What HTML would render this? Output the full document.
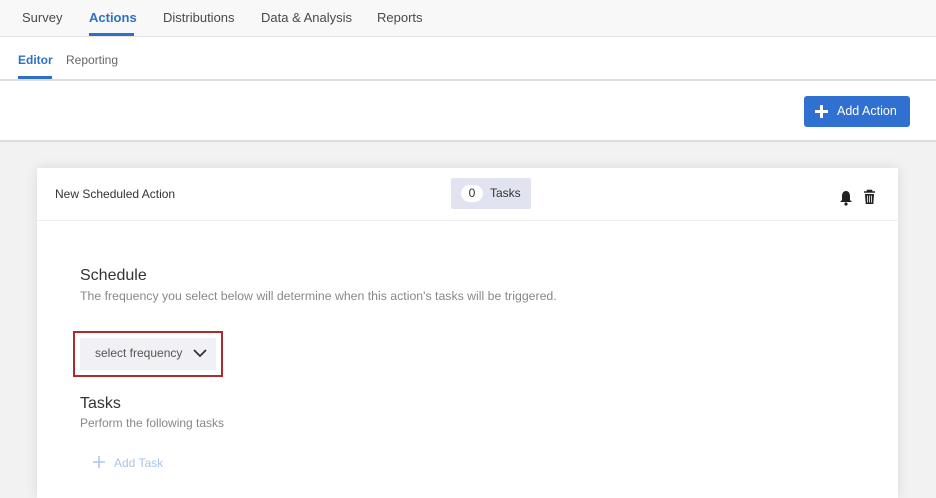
<!DOCTYPE html>
<html><head><style>
*{margin:0;padding:0;box-sizing:border-box}
body{width:936px;height:484px;overflow:hidden;background:#f2f2f2;font-family:"Liberation Sans",sans-serif;position:relative}
.a{position:absolute}
.nav{left:0;top:0;width:936px;height:37px;background:#f8f8f8;border-bottom:1px solid #e4e4e4}
.nav span{position:absolute;top:10px;font-size:13px;color:#4a4a4a}
.sub{left:0;top:37px;width:936px;height:105px;background:#fff;border-bottom:2px solid #ddd}
.sub .line{position:absolute;left:0;top:42px;width:936px;height:2px;background:#ddd}
.card{left:37px;top:168px;width:861px;height:330px;background:#fff;box-shadow:0 0 12px rgba(0,0,0,.1)}
</style></head><body>
<div class="a nav">
<span style="left:22px">Survey</span>
<span style="left:89px;color:#2e70c4;font-weight:bold">Actions</span>
<div class="a" style="left:89px;top:33px;width:45px;height:3px;background:#2e70c4"></div>
<span style="left:163px">Distributions</span>
<span style="left:261px">Data &amp; Analysis</span>
<span style="left:377px">Reports</span>
</div>
<div class="a sub">
<div class="a" style="left:18px;top:16px;font-size:12px;font-weight:bold;color:#2e70c4">Editor</div>
<div class="a" style="left:18px;top:39px;width:34px;height:3px;background:#2e70c4"></div>
<div class="a" style="left:66px;top:16px;font-size:12px;color:#666">Reporting</div>
<div class="line"></div>
<div class="a" style="left:804px;top:59px;width:106px;height:31px;background:#2f70d0;border-radius:3px;color:#fff;font-size:12.5px">
<svg class="a" style="left:10px;top:8px" width="15" height="15"><path d="M7.5 1v13M1 7.5h13" stroke="#fff" stroke-width="3"/></svg>
<span class="a" style="left:33px;top:8px">Add Action</span></div>
</div>
<div class="a card">
<div class="a" style="left:18px;top:19px;font-size:12px;color:#333">New Scheduled Action</div>
<div class="a" style="left:414px;top:10px;width:80px;height:31px;background:#e1e3f0;border-radius:2px">
<div class="a" style="left:10px;top:7px;width:22px;height:17px;background:#fff;border-radius:9px;font-size:12px;color:#333;text-align:center;line-height:17px">0</div>
<span class="a" style="left:39px;top:8px;font-size:12px;color:#333">Tasks</span></div>
<svg class="a" style="left:802px;top:22px" width="14" height="16"><path d="M7 1C4 1 3 4 3 6v4L1 12h12l-2-2V6c0-2-1-5-4-5z" fill="#222"/><circle cx="7" cy="14" r="1.6" fill="#222"/></svg>
<svg class="a" style="left:826px;top:21px" width="13" height="16"><path d="M1 3h11M4.5 3V1.5h4V3" stroke="#222" stroke-width="1.5" fill="none"/><path d="M2 5h9l-.7 10H2.7z" fill="#222"/><path d="M4.5 6.5v7M6.5 6.5v7M8.5 6.5v7" stroke="#fff" stroke-width=".8"/></svg>
<div class="a" style="left:0;top:52px;width:861px;height:1px;background:#eee"></div>
<div class="a" style="left:43px;top:99px;font-size:16px;color:#333">Schedule</div>
<div class="a" style="left:43px;top:121px;font-size:12.3px;color:#888">The frequency you select below will determine when this action's tasks will be triggered.</div>
<div class="a" style="left:36px;top:163px;width:150px;height:46px;border:2px solid #b0292f"></div>
<div class="a" style="left:43px;top:170px;width:136px;height:32px;background:#f0f0f5;font-size:12px;color:#555">
<span class="a" style="left:15px;top:8px">select frequency</span>
<svg class="a" style="left:113px;top:10px" width="14" height="10"><path d="M1 2l6 6 6-6" stroke="#333" stroke-width="1.8" fill="none"/></svg></div>
<div class="a" style="left:43px;top:227px;font-size:16px;color:#333">Tasks</div>
<div class="a" style="left:43px;top:248px;font-size:12px;color:#888">Perform the following tasks</div>
<svg class="a" style="left:56px;top:288px" width="12" height="12"><path d="M6 0v12M0 6h12" stroke="#a9c5ec" stroke-width="1.5"/></svg>
<div class="a" style="left:77px;top:288px;font-size:12px;color:#a9c5ec">Add Task</div>
</div>
</body></html>
